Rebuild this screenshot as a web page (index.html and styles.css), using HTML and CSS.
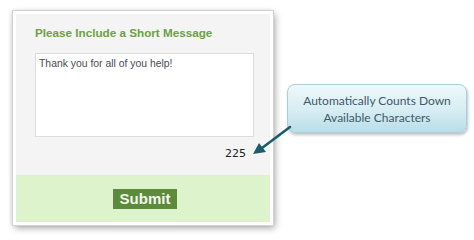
FILE: index.html
```html
<!DOCTYPE html>
<html>
<head>
<meta charset="utf-8">
<link rel="stylesheet" href="styles.css">
</head>
<body>
<div class="page">
  <div class="card">
    <div class="form-body">
      <h2 class="title">Please Include a Short Message</h2>
      <div class="message">Thank you for all of you help!</div>
      <div class="counter">225</div>
    </div>
    <div class="form-foot">
      <span class="submit">Submit</span>
    </div>
  </div>
</div>
<div class="callout">Automatically Counts Down<br>Available Characters</div>
<svg class="arrow" width="474" height="240" viewBox="0 0 474 240">
  <line x1="290" y1="127" x2="262" y2="148" stroke="#1d5c6a" stroke-width="2.6" stroke-linecap="round"/>
  <polygon points="253,154 259,143 266,152" fill="#1d5c6a"/>
</svg>
</body>
</html>
```
FILE: styles.css
```css
html, body {
  margin: 0;
  padding: 0;
  background: #ffffff;
  width: 474px;
  height: 240px;
  overflow: hidden;
}
.page {
  padding: 11px 0 0 13px;
}
.card {
  width: 254px;
  border: 3px solid #ffffff;
  box-shadow: 0 0 0 1px #d4d4d4, 2px 3px 7px rgba(0,0,0,0.35), -1px 0 4px rgba(0,0,0,0.15);
  display: flex;
  flex-direction: column;
}
.form-body {
  background: #f4f4f4;
  height: 161px;
  padding: 0 16px 0 19px;
  box-sizing: border-box;
  display: flex;
  flex-direction: column;
}
.title {
  margin: 11px 0 0 0;
  font-family: "Liberation Sans", Arial, sans-serif;
  font-weight: bold;
  font-size: 11.7px;
  line-height: 15px;
  color: #6ba23e;
}
.message {
  margin-top: 13px;
  height: 84px;
  box-sizing: border-box;
  background: #ffffff;
  border: 1px solid #dcdcdc;
  padding: 3px 3px;
  font-family: "Liberation Sans", Arial, sans-serif;
  font-size: 10.4px;
  line-height: 14px;
  color: #4a4a55;
}
.counter {
  align-self: flex-end;
  margin: 10px 8px 0 0;
  font-family: "DejaVu Sans", Verdana, sans-serif;
  font-size: 11px;
  line-height: 14px;
  color: #222222;
}
.form-foot {
  background: #ddf3cb;
  height: 47px;
  display: flex;
  justify-content: center;
  align-items: flex-start;
  padding-left: 4px;
  box-sizing: border-box;
}
.submit {
  margin-top: 14px;
  width: 64px;
  height: 20px;
  background: #5b8b3b;
  color: #f4f7ea;
  font-family: "Liberation Sans", Arial, sans-serif;
  font-weight: bold;
  font-size: 15px;
  line-height: 20px;
  text-align: center;
}
.callout {
  position: absolute;
  left: 287px;
  top: 84px;
  width: 180px;
  height: 49px;
  box-sizing: border-box;
  border: 1px solid #a9cfda;
  border-radius: 8px;
  background: linear-gradient(to bottom, #eef8fb 0%, #d6edf3 55%, #b9dde8 100%);
  box-shadow: 1px 2px 3px rgba(0,0,0,0.25);
  font-family: Lato, "Open Sans", sans-serif;
  font-size: 12px;
  line-height: 17px;
  color: #3f5968;
  text-align: center;
  padding-top: 7px;
}
.arrow {
  position: absolute;
  left: 0;
  top: 0;
  pointer-events: none;
}
```
